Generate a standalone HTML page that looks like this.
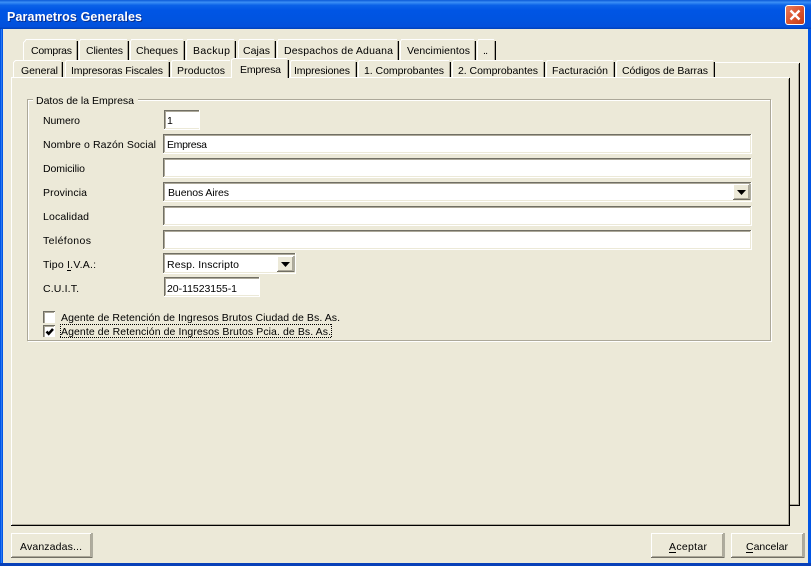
<!DOCTYPE html>
<html><head><meta charset="utf-8"><title>Parametros Generales</title>
<style>
html,body{margin:0;padding:0;background:#ECE9D8;width:811px;height:566px;overflow:hidden}
svg{display:block}
text{font-family:"Liberation Sans",Arial,sans-serif;font-size:10.5px;fill:#000}
.l{shape-rendering:crispEdges;fill:none;stroke-width:1}
.w{stroke:#fff}.k{stroke:#000}.g{stroke:#ACA899}.d{stroke:#716F64}.m{stroke:#ECE9D8}
</style></head><body>
<svg width="811" height="566" viewBox="0 0 811 566" xmlns="http://www.w3.org/2000/svg">
<defs>
<linearGradient id="t" x1="0" y1="0" x2="0" y2="1">
<stop offset="0" stop-color="#0A5AD8"/><stop offset=".08" stop-color="#3B8FF5"/><stop offset=".18" stop-color="#0B62E8"/><stop offset=".35" stop-color="#0055E5"/><stop offset=".7" stop-color="#0054E0"/><stop offset=".92" stop-color="#0350DC"/><stop offset="1" stop-color="#0040B8"/>
</linearGradient>
<linearGradient id="x" x1="0" y1="0" x2="1" y2="1"><stop offset="0" stop-color="#E9805F"/><stop offset=".5" stop-color="#DC5530"/><stop offset="1" stop-color="#C23A14"/></linearGradient>
</defs>

<!-- window frame -->
<rect width="811" height="566" fill="#0055E5"/>
<rect x="1" y="29" width="1" height="534" fill="#2A78F0"/>
<rect x="0" y="0" width="811" height="29" fill="url(#t)"/>
<rect x="0" y="563" width="811" height="3" fill="#0840B8"/>
<rect x="3" y="29" width="805" height="534" fill="#ECE9D8"/>

<text x="8" y="22" textLength="135" lengthAdjust="spacing" style="font-weight:bold;font-size:12.5px;fill:#0A2F90">Parametros Generales</text>
<text x="7" y="21" textLength="135" lengthAdjust="spacing" style="font-weight:bold;font-size:12.5px;fill:#fff">Parametros Generales</text>

<!-- close button -->
<rect x="785.5" y="5.5" width="19" height="19" rx="2.5" fill="url(#x)" stroke="#fff"/>
<path d="M790.5 10.5L799.5 19.5M799.5 10.5L790.5 19.5" stroke="#fff" stroke-width="2.4" fill="none"/>

<!-- outer page -->
<path class="l w" d="M714 62.5H799"/>
<path class="l k" d="M799.5 63V506M790 505.5H800"/>
<path class="l g" d="M798.5 64V505M790 504.5H799"/>

<!-- row 1 tabs -->
<g class="l">
<path class="w" d="M23.5 60V42.5L25.5 40.5L26 39.5H76"/><path class="k" d="M77.5 41V60"/><path class="g" d="M76.5 41V60"/>
<path class="w" d="M79.5 60V41.5L80.5 39.5H127"/><path class="k" d="M128.5 41V60"/><path class="g" d="M127.5 41V60"/>
<path class="w" d="M130.5 60V41.5L131.5 39.5H183"/><path class="k" d="M184.5 41V60"/><path class="g" d="M183.5 41V60"/>
<path class="w" d="M186.5 60V41.5L187.5 39.5H234"/><path class="k" d="M235.5 41V60"/><path class="g" d="M234.5 41V60"/>
<path class="w" d="M238.5 60V41.5L239.5 39.5H274"/><path class="k" d="M275.5 41V60"/><path class="g" d="M274.5 41V60"/>
<path class="w" d="M277.5 60V41.5L278.5 39.5H397"/><path class="k" d="M398.5 41V60"/><path class="g" d="M397.5 41V60"/>
<path class="w" d="M400.5 60V41.5L401.5 39.5H474"/><path class="k" d="M475.5 41V60"/><path class="g" d="M474.5 41V60"/>
<path class="w" d="M477.5 60V41.5L478.5 39.5H494"/><path class="k" d="M495.5 41V60"/><path class="g" d="M494.5 41V60"/>
</g>
<text x="31" y="54" textLength="41">Compras</text>
<text x="86" y="54" textLength="37">Clientes</text>
<text x="136" y="54" textLength="42">Cheques</text>
<text x="193" y="54" textLength="37">Backup</text>
<text x="243" y="54" textLength="27">Cajas</text>
<text x="284" y="54" textLength="109">Despachos de Aduana</text>
<text x="407" y="54" textLength="63">Vencimientos</text>
<text x="483" y="54" textLength="5">..</text>

<!-- inner page -->
<path class="l w" d="M11.5 525V77.5H231M289 77.5H789"/>
<path class="l k" d="M789.5 78V526M11 525.5H790"/>
<path class="l g" d="M788.5 79V525M12 524.5H789"/>

<!-- row 2 tabs -->
<rect x="12" y="60" width="702" height="17" fill="#ECE9D8"/>
<g class="l">
<path class="w" d="M13.5 77V62.5L15.5 60.5H61"/><path class="k" d="M62.5 62V77"/><path class="g" d="M61.5 62V77"/>
<path class="w" d="M65.5 77V62L66.5 60.5H168"/><path class="k" d="M169.5 62V77"/><path class="g" d="M168.5 62V77"/>
<path class="w" d="M171.5 77V62L172.5 60.5H230"/>
<path class="w" d="M290.5 77V62L291.5 60.5H355"/><path class="k" d="M356.5 62V77"/><path class="g" d="M355.5 62V77"/>
<path class="w" d="M358.5 77V62L359.5 60.5H449"/><path class="k" d="M450.5 62V77"/><path class="g" d="M449.5 62V77"/>
<path class="w" d="M452.5 77V62L453.5 60.5H543"/><path class="k" d="M544.5 62V77"/><path class="g" d="M543.5 62V77"/>
<path class="w" d="M546.5 77V62L547.5 60.5H613"/><path class="k" d="M614.5 62V77"/><path class="g" d="M613.5 62V77"/>
<path class="w" d="M616.5 77V62L617.5 60.5H713"/><path class="k" d="M714.5 62V77"/><path class="g" d="M713.5 62V77"/>
</g>
<!-- selected tab -->
<rect x="231" y="58" width="58" height="21" fill="#ECE9D8"/>
<g class="l">
<path class="w" d="M231.5 78V60L233.5 58.5H287"/><path class="k" d="M288.5 60V78"/><path class="g" d="M287.5 60V78"/>
</g>
<text x="21" y="74" textLength="37">General</text>
<text x="71" y="74" textLength="92">Impresoras Fiscales</text>
<text x="177" y="74" textLength="48">Productos</text>
<text x="240" y="73" textLength="41">Empresa</text>
<text x="294" y="74" textLength="56">Impresiones</text>
<text x="364" y="74" textLength="80">1. Comprobantes</text>
<text x="458" y="74" textLength="80">2. Comprobantes</text>
<text x="552" y="74" textLength="56">Facturación</text>
<text x="622" y="74" textLength="86">Códigos de Barras</text>

<!-- group box -->
<rect class="l w" x="28.5" y="100.5" width="743" height="241"/>
<rect class="l g" x="27.5" y="99.5" width="743" height="241"/>
<rect x="33" y="96" width="105" height="8" fill="#ECE9D8"/>
<text x="36" y="104" textLength="98">Datos de la Empresa</text>

<!-- labels -->
<text x="43" y="124" textLength="37">Numero</text>
<text x="43" y="148" textLength="113">Nombre o Razón Social</text>
<text x="43" y="172" textLength="42">Domicilio</text>
<text x="43" y="196" textLength="44">Provincia</text>
<text x="43" y="220" textLength="46">Localidad</text>
<text x="43" y="244" textLength="48">Teléfonos</text>
<text x="43" y="268" textLength="53">Tipo I.V.A.:</text>
<rect x="67" y="270" width="4" height="1" fill="#000"/>
<text x="43" y="292" textLength="36">C.U.I.T.</text>

<!-- inputs -->
<g class="l">
<rect x="164" y="110" width="36" height="20" fill="#fff" stroke="none"/>
<path class="d" d="M164.5 129V110.5H199"/><path class="g" d="M165.5 129V111.5H199"/><path class="m" d="M165 128.5H199"/>

<rect x="163" y="134" width="589" height="20" fill="#fff" stroke="none"/>
<path class="d" d="M163.5 153V134.5H751"/><path class="g" d="M164.5 153V135.5H751"/><path class="m" d="M164 152.5H750.5V135"/>

<rect x="163" y="158" width="589" height="20" fill="#fff" stroke="none"/>
<path class="d" d="M163.5 177V158.5H751"/><path class="g" d="M164.5 177V159.5H751"/><path class="m" d="M164 176.5H750.5V159"/>

<rect x="163" y="182" width="589" height="20" fill="#fff" stroke="none"/>
<path class="d" d="M163.5 201V182.5H751"/><path class="g" d="M164.5 201V183.5H751"/><path class="m" d="M164 200.5H750.5V183"/>

<rect x="163" y="206" width="589" height="20" fill="#fff" stroke="none"/>
<path class="d" d="M163.5 225V206.5H751"/><path class="g" d="M164.5 225V207.5H751"/><path class="m" d="M164 224.5H750.5V207"/>

<rect x="163" y="230" width="589" height="20" fill="#fff" stroke="none"/>
<path class="d" d="M163.5 249V230.5H751"/><path class="g" d="M164.5 249V231.5H751"/><path class="m" d="M164 248.5H750.5V231"/>

<rect x="163" y="253" width="133" height="21" fill="#fff" stroke="none"/>
<path class="d" d="M163.5 273V253.5H295"/><path class="g" d="M164.5 273V254.5H295"/><path class="m" d="M164 272.5H294.5V255"/>

<rect x="164" y="277" width="96" height="20" fill="#fff" stroke="none"/>
<path class="d" d="M164.5 296V277.5H259"/><path class="g" d="M165.5 296V278.5H259"/><path class="m" d="M165 295.5H259"/>
</g>
<text x="167" y="124">1</text>
<text x="167" y="148" textLength="40">Empresa</text>
<text x="168" y="196" textLength="61">Buenos Aires</text>
<text x="167" y="268" textLength="72">Resp. Inscripto</text>
<text x="167" y="292" textLength="70">20-11523155-1</text>

<!-- combo buttons -->
<rect x="733" y="184" width="17" height="16" fill="#ECE9D8"/>
<g class="l"><path class="w" d="M733.5 199V184.5H749"/><path class="d" d="M733 199.5H750V184"/><path class="g" d="M734 198.5H748.5V185"/></g>
<path d="M737 190H746L741.5 195Z" fill="#000"/>

<rect x="277" y="256" width="17" height="16" fill="#ECE9D8"/>
<g class="l"><path class="w" d="M277.5 271V256.5H293"/><path class="d" d="M277 271.5H294V256"/><path class="g" d="M278 270.5H292.5V257"/></g>
<path d="M281 262H290L285.5 267Z" fill="#000"/>

<!-- checkboxes -->
<rect x="44" y="312" width="11" height="11" fill="#fff"/>
<g class="l"><path class="d" d="M43.5 323V311.5H55"/><path class="g" d="M44.5 323V312.5H54"/><path class="m" d="M44 323.5H55.5V312"/></g>
<rect x="44" y="326" width="11" height="11" fill="#fff"/>
<g class="l"><path class="d" d="M43.5 337V325.5H55"/><path class="g" d="M44.5 337V326.5H54"/><path class="m" d="M44 337.5H55.5V326"/></g>
<path d="M46.5 331.5L48.7 333.8L53 329" fill="none" stroke="#000" stroke-width="2.5"/>
<text x="61" y="321" textLength="279">Agente de Retención de Ingresos Brutos Ciudad de Bs. As.</text>
<text x="61" y="335" textLength="270">Agente de Retención de Ingresos Brutos Pcia. de Bs. As.</text>
<path d="M60 324.5H332M60 337.5H332M60.5 324V338M331.5 324V338" fill="none" stroke="#000" stroke-dasharray="1 1"/>

<!-- buttons -->
<g class="l">
<path class="w" d="M11.5 558V533.5H91"/><path class="d" d="M11 557.5H92V533"/><path class="g" d="M12 556.5H90.5V534"/>
<path class="w" d="M651.5 558V533.5H723"/><path class="d" d="M651 557.5H724V533"/><path class="g" d="M652 556.5H722.5V534"/>
<path class="w" d="M731.5 558V533.5H803"/><path class="d" d="M731 557.5H804V533"/><path class="g" d="M732 556.5H802.5V534"/>
</g>
<text x="20" y="550" textLength="62">Avanzadas...</text>
<text x="669" y="550" textLength="38">Aceptar</text>
<rect x="669" y="552" width="7" height="1" fill="#000"/>
<text x="746" y="550" textLength="42">Cancelar</text>
<rect x="746" y="552" width="7" height="1" fill="#000"/>
</svg>
</body></html>
